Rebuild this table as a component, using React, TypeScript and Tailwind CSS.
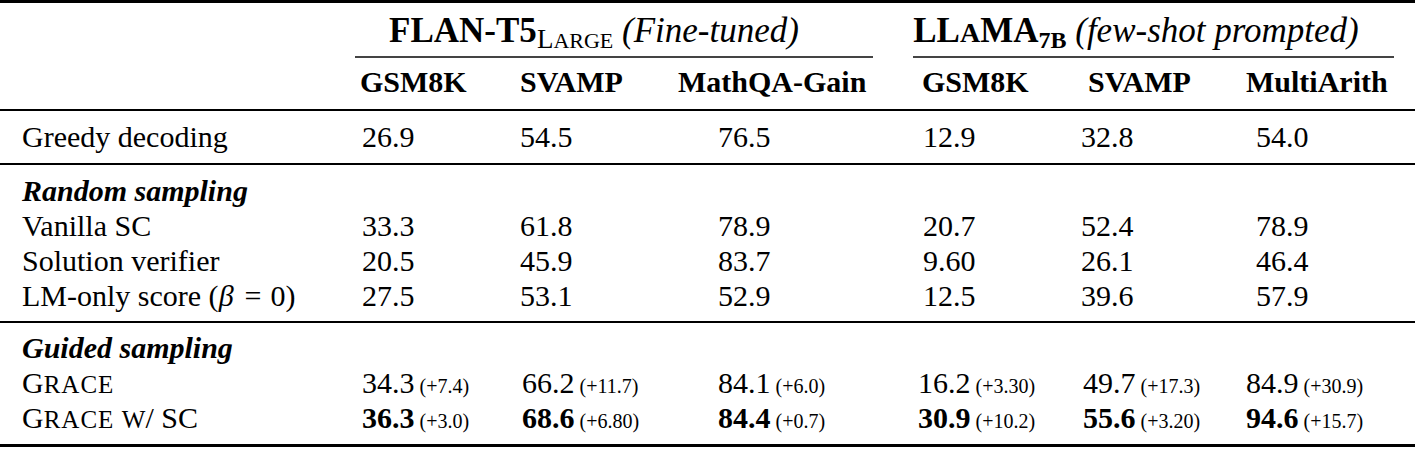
import React from 'react';

const cols = 'grid grid-cols-[358px_162px_158px_240px_163px_165px_169px]';

type Cell = { v: string; d?: string; b?: boolean };

const Val = ({ c, pad = '' }: { c: Cell; pad?: string }) => (
  <div className={`${pad} whitespace-nowrap`}>
    <span className={c.b ? 'font-bold' : ''}>{c.v}</span>
    {c.d && <span className="text-[20px]"> {c.d}</span>}
  </div>
);

// left offsets inside each column, as in the typeset table
const pads = ['pl-[4px]', 'pl-0', 'pl-[40px]', 'pl-[5px]', 'pl-0', 'pl-[10px]'];
const padsDelta = ['pl-[4px]', 'pl-[2px]', 'pl-[40px]', 'pl-0', 'pl-[2px]', 'pl-0'];

const Row = ({ label, cells, delta }: { label: React.ReactNode; cells: Cell[]; delta?: boolean }) => (
  <div className={`${cols} h-[35px] leading-[35px]`}>
    <div className="pl-[22px] whitespace-nowrap">{label}</div>
    {cells.map((c, i) => (
      <Val key={i} c={c} pad={delta ? padsDelta[i] : pads[i]} />
    ))}
  </div>
);

const plain = (xs: string[]): Cell[] => xs.map((v) => ({ v }));

// LaTeX style small caps: capital initial, reduced capitals after it
const Grace = () => (
  <span>
    G<span className="text-[25px] tracking-[1px]">RACE</span>
  </span>
);

export default function App() {
  return (
    <div className="w-[1415px] h-[450px] bg-white text-black text-[30px] [font-family:Liberation_Serif,Times_New_Roman,serif] overflow-hidden">
      <div className="h-[3px] bg-black" />

      {/* model group headers */}
      <div className="flex pt-[10px] pb-[8px] whitespace-nowrap text-[35px]">
        <div className="ml-[355px] w-[478px] h-[35px] leading-[35px] text-center">
          <span className="font-bold">FLAN-T5</span>
          <span className="relative top-[6px] text-[27px]">
            L<span className="text-[22px]">ARGE</span>
          </span>{' '}
          <i>(Fine-tuned)</i>
        </div>
        <div className="ml-[80px] w-[446px] h-[35px] leading-[35px] text-center">
          <span className="font-bold">
            LL<span className="text-[28px]">A</span>MA
          </span>
          <span className="relative top-[6px] text-[24px] font-bold">7B</span>{' '}
          <i>(few-shot prompted)</i>
        </div>
      </div>
      <div className="flex">
        <div className="ml-[355px] w-[518px] h-[2px] bg-[#444]" />
        <div className="ml-[40px] w-[481px] h-[2px] bg-[#444]" />
      </div>

      {/* dataset headers */}
      <div className={`${cols} pt-[6px] pb-[10px] leading-[35px] font-bold whitespace-nowrap`}>
        <div />
        <div className="pl-[2px]">GSM8K</div>
        <div>SVAMP</div>
        <div>MathQA-Gain</div>
        <div className="pl-[4px]">GSM8K</div>
        <div className="pl-[7px]">SVAMP</div>
        <div>MultiArith</div>
      </div>
      <div className="h-[2px] bg-black" />

      <div className="pt-[8px] pb-[9px]">
        <Row label="Greedy decoding" cells={plain(['26.9', '54.5', '76.5', '12.9', '32.8', '54.0'])} />
      </div>
      <div className="h-[2px] bg-black" />

      <div className="pt-[8px] pb-[8px]">
        <div className="pl-[22px] h-[35px] leading-[35px] font-bold italic">Random sampling</div>
        <Row label="Vanilla SC" cells={plain(['33.3', '61.8', '78.9', '20.7', '52.4', '78.9'])} />
        <Row label="Solution verifier" cells={plain(['20.5', '45.9', '83.7', '9.60', '26.1', '46.4'])} />
        <Row
          label={
            <>
              LM-only score (<i className="pr-[2px]">β</i>
              <span className="mx-[9px]">=</span>0)
            </>
          }
          cells={plain(['27.5', '53.1', '52.9', '12.5', '39.6', '57.9'])}
        />
      </div>
      <div className="h-[2px] bg-black" />

      <div className="pt-[7px] pb-[9px]">
        <div className="pl-[22px] h-[35px] leading-[35px] font-bold italic">Guided sampling</div>
        <Row
          delta
          label={<Grace />}
          cells={[
            { v: '34.3', d: '(+7.4)' },
            { v: '66.2', d: '(+11.7)' },
            { v: '84.1', d: '(+6.0)' },
            { v: '16.2', d: '(+3.30)' },
            { v: '49.7', d: '(+17.3)' },
            { v: '84.9', d: '(+30.9)' },
          ]}
        />
        <Row
          delta
          label={
            <>
              <Grace /> <span className="text-[25px]">W</span>/ SC
            </>
          }
          cells={[
            { v: '36.3', d: '(+3.0)', b: true },
            { v: '68.6', d: '(+6.80)', b: true },
            { v: '84.4', d: '(+0.7)', b: true },
            { v: '30.9', d: '(+10.2)', b: true },
            { v: '55.6', d: '(+3.20)', b: true },
            { v: '94.6', d: '(+15.7)', b: true },
          ]}
        />
      </div>
      <div className="h-[3px] bg-black" />
    </div>
  );
}
